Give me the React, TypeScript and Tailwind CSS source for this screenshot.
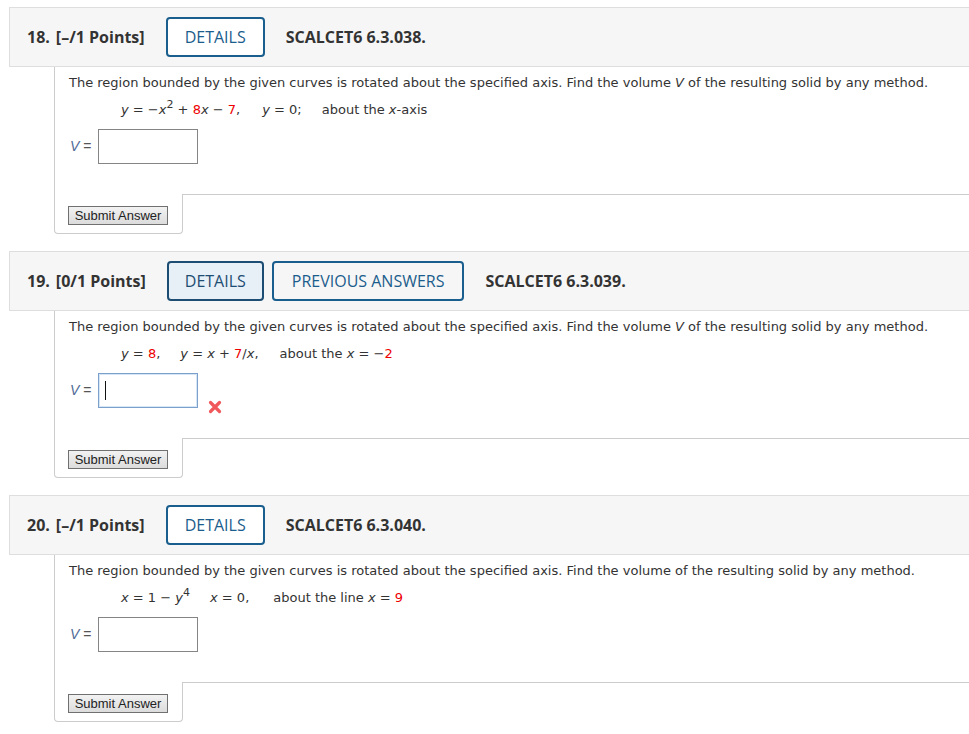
import React from "react";

const Red = ({ children }: { children: React.ReactNode }) => (
  <span className="text-[#ee0000]">{children}</span>
);

const Gap = ({ w }: { w: string }) => <span className={`inline-block ${w}`} />;

const WrongMark = () => (
  <svg width="14" height="14" viewBox="0 0 14 14" className="mb-[-6px] ml-[10px]">
    <path d="M2.5 2.5 L11.5 11.5 M11.5 2.5 L2.5 11.5" stroke="#f0585c" strokeWidth="3.2" strokeLinecap="round" />
  </svg>
);

const Question = ({
  num,
  points,
  code,
  previous,
  focused,
  wrong,
  prompt,
  equation,
}: {
  num: string;
  points: string;
  code: string;
  previous?: boolean;
  focused?: boolean;
  wrong?: boolean;
  prompt: React.ReactNode;
  equation: React.ReactNode;
}) => {
  return (
    <div className="mb-[17px]">
      <div className="ml-[9px] h-[60px] border border-r-0 border-[#dedede] bg-[#f6f6f6] flex items-center pl-[17px] font-['Open_Sans',sans-serif] text-[16px] text-[#333]">
        <span className="font-bold mr-[6px]">{num}</span>
        <span className="font-bold">{points}</span>
        <button
          className={
            previous
              ? "ml-[21px] h-[40px] px-[16px] border-2 border-[#1d4d72] rounded-[4px] bg-[#e7eff7] text-[#1d4d72] leading-none"
              : "ml-[21px] h-[40px] px-[17px] border-2 border-[#1a5e8e] rounded-[4px] bg-white text-[#1b5d8c] leading-none"
          }
        >
          DETAILS
        </button>
        {previous && (
          <button className="ml-[8px] h-[40px] px-[18px] border-2 border-[#1a5e8e] rounded-[4px] bg-[#f6f6f6] text-[#1b5d8c] leading-none">
            PREVIOUS ANSWERS
          </button>
        )}
        <span className="ml-[21px] font-bold">{code}</span>
      </div>

      <div className="ml-[54px] border-l border-[#cccccc] pt-[8px] pl-[14px] pb-[30px] font-['DejaVu_Sans',Verdana,sans-serif] text-[13px] text-[#333]">
        <p className="leading-[16px] h-[16px]">{prompt}</p>
        <p className="leading-[16px] h-[16px] mt-[11px] ml-[52px] whitespace-pre">{equation}</p>
        <div className="mt-[11px] ml-[1px] flex items-end h-[35px]">
          <div className="flex items-center">
            <span className="font-['Liberation_Sans',Arial,sans-serif] text-[14px] text-[#555] mr-[7px]">
              <i className="text-[#4f6b96]">V</i> =
            </span>
            {focused ? (
              <div className="w-[100px] h-[35px] border border-[#7ba1cb] shadow-[inset_0_0_0_1px_#d6e6f6] bg-white flex items-center pl-[6px]">
                <span className="w-[1px] h-[19px] bg-[#111]" />
              </div>
            ) : (
              <div className="w-[100px] h-[35px] border border-[#858585] bg-white" />
            )}
          </div>
          {wrong && <WrongMark />}
        </div>
      </div>

      <div className="flex">
        <div className="ml-[54px] w-[129px] h-[40px] border border-t-0 border-[#cccccc] rounded-b-[4px] pt-[12px] pl-[13px] flex items-start">
          <button className="w-[100px] h-[19px] border border-[#707070] bg-gradient-to-b from-[#f2f2f2] to-[#dcdcdc] font-['Liberation_Sans',Arial,sans-serif] text-[13px] text-[#222] leading-none">
            Submit Answer
          </button>
        </div>
        <div className="flex-1 border-t border-[#cccccc]" />
      </div>
    </div>
  );
};

const prompt = (v: boolean) => (
  <>
    The region bounded by the given curves is rotated about the specified axis. Find the volume{" "}
    {v && (
      <>
        <i>V</i>{" "}
      </>
    )}
    of the resulting solid by any method.
  </>
);

export default function App() {
  return (
    <div className="bg-white min-h-screen pt-[7px] w-[969px] overflow-hidden">
      <Question
        num="18."
        points="[–/1 Points]"
        code="SCALCET6 6.3.038."
        prompt={prompt(true)}
        equation={
          <>
            <i>y</i> = −<i>x</i>
            <sup className="text-[11px] relative top-[-6px]">2</sup> + <Red>8</Red>
            <i>x</i> − <Red>7</Red>,<Gap w="w-[22px]" />
            <i>y</i> = 0;<Gap w="w-[20px]" />
            about the <i>x</i>-axis
          </>
        }
      />
      <Question
        num="19."
        points="[0/1 Points]"
        code="SCALCET6 6.3.039."
        previous
        focused
        wrong
        prompt={prompt(true)}
        equation={
          <>
            <i>y</i> = <Red>8</Red>,<Gap w="w-[20px]" />
            <i>y</i> = <i>x</i> + <Red>7</Red>/<i>x</i>,<Gap w="w-[21px]" />
            about the <i>x</i> = −<Red>2</Red>
          </>
        }
      />
      <Question
        num="20."
        points="[–/1 Points]"
        code="SCALCET6 6.3.040."
        prompt={prompt(false)}
        equation={
          <>
            <i>x</i> = 1 − <i>y</i>
            <sup className="text-[11px] relative top-[-6px]">4</sup>
            <Gap w="w-[20px]" />
            <i>x</i> = 0,<Gap w="w-[24px]" />
            about the line <i>x</i> = <Red>9</Red>
          </>
        }
      />
    </div>
  );
}
